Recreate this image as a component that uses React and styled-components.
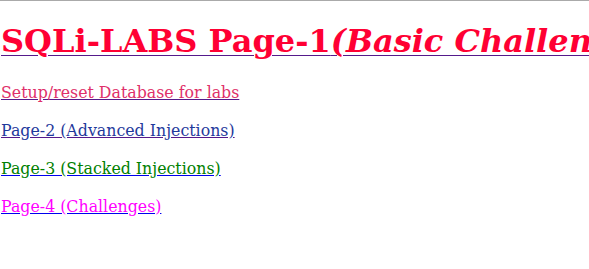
import styled, { createGlobalStyle } from "styled-components";

const GlobalStyle = createGlobalStyle`
  body {
    margin: 0;
    background: #fff;
    font-family: "DejaVu Serif", serif;
    overflow: hidden;
  }
`;

const Page = styled.div`
  display: flex;
  flex-direction: column;
  padding-left: 1px;
`;

const Rule = styled.hr`
  margin: 0 0 0 -1px;
  border: none;
  height: 1px;
  background: #aaaaaa;
`;

const Heading = styled.div`
  margin-top: 22px;
  height: 37px;
  line-height: 37px;
  white-space: nowrap;
`;

const TitleLink = styled.a`
  font-size: 16px;
  line-height: 16px;
  color: #551a8b;
  text-decoration: underline;
  text-underline-offset: 3px;
`;

const Title = styled.span`
  font-size: 32px;
  line-height: 37px;
  font-weight: bold;
  font-style: ${(p) => (p.$italic ? "italic" : "normal")};
  color: #ff0033;
`;

const Links = styled.div`
  display: flex;
  flex-direction: column;
  gap: 19px;
  margin-top: 23px;
`;

const Row = styled.div`
  font-size: 15.8px;
  line-height: 19px;
`;

const Link = styled.a`
  color: ${(p) => (p.$visited ? "#551a8b" : "#0000ee")};
  text-decoration: underline;
`;

const Label = styled.span`
  color: ${(p) => p.$color};
`;

const items = [
  { text: "Setup/reset Database for labs", color: "#e0306a", visited: true },
  { text: "Page-2 (Advanced Injections)", color: "#1f3a9c", visited: true },
  { text: "Page-3 (Stacked Injections)", color: "#008000", visited: false },
  { text: "Page-4 (Challenges)", color: "#ff00ff", visited: false },
];

export default function App() {
  return (
    <>
      <GlobalStyle />
      <Page>
        <Rule />
        <Heading>
          <TitleLink href="#">
            <Title>SQLi-LABS Page-1</Title>
            <Title $italic>(Basic Challenges)</Title>
          </TitleLink>
        </Heading>
        <Links>
          {items.map((it) => (
            <Row key={it.text}>
              <Link href="#" $visited={it.visited}>
                <Label $color={it.color}>{it.text}</Label>
              </Link>
            </Row>
          ))}
        </Links>
      </Page>
    </>
  );
}
